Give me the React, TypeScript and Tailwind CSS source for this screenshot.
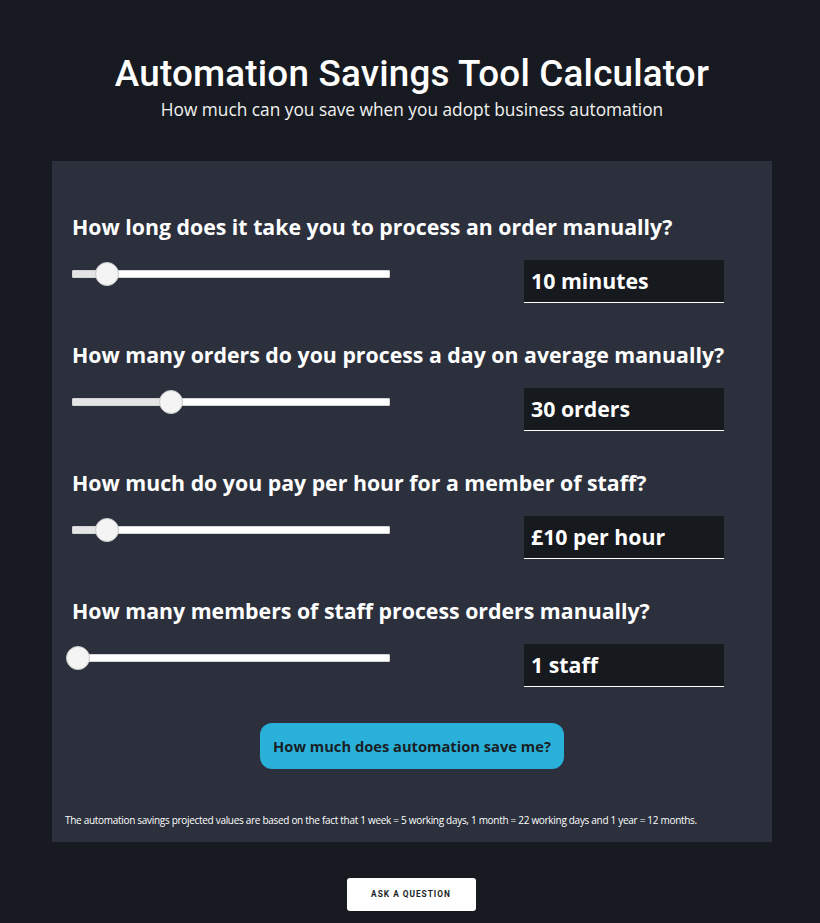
const questions = [
  { label: "How long does it take you to process an order manually?", value: "10 minutes", pos: 11 },
  { label: "How many orders do you process a day on average manually?", value: "30 orders", pos: 31.2 },
  { label: "How much do you pay per hour for a member of staff?", value: "£10 per hour", pos: 11 },
  { label: "How many members of staff process orders manually?", value: "1 staff", pos: 1.8 },
];

function Slider({ pos }: { pos: number }) {
  return (
    <div className="relative h-[27px] w-[318px] flex items-center">
      <div className="h-[8px] w-full bg-white rounded-[1px] border border-[#d4d4d4] overflow-hidden">
        <div className="h-full bg-[#e4e4e4]" style={{ width: `${pos}%` }} />
      </div>
      <div
        className="absolute top-[2px] h-[24px] w-[24px] -ml-[12px] rounded-full bg-[#f4f4f4] border border-[#c9c9c9]"
        style={{ left: `${pos}%` }}
      />
    </div>
  );
}

export default function App() {
  return (
    <div className="min-h-screen bg-[#171a20] pl-[4px] flex flex-col items-center font-['Open_Sans',sans-serif] text-white">
      <h1 className="mt-[52px] text-[36.8px] leading-[44px] font-medium font-['Roboto',sans-serif] tracking-[0.2px]">
        Automation Savings Tool Calculator
      </h1>
      <p className="mt-[2px] text-[17.3px] leading-[24px] text-[#f2f2f2]">
        How much can you save when you adopt business automation
      </p>

      <div className="mt-[39px] w-[720px] bg-[#2b303c] pt-[52px] pb-[16px]">
        {questions.map((q) => (
          <div key={q.label} className="px-[20px] mb-[38px]">
            <h2 className="text-[21.3px] leading-[27px] font-bold">{q.label}</h2>
            <div className="mt-[20px] flex items-start justify-between pr-[28px]">
              <Slider pos={q.pos} />
              <div className="w-[200px] h-[43px] bg-[#16191e] border-b border-white px-[7px] flex items-center text-[21.3px] font-bold">
                {q.value}
              </div>
            </div>
          </div>
        ))}

        <div className="-mt-[2px] flex justify-center">
          <button className="h-[46px] px-[13px] rounded-[12px] bg-[#29b1d9] text-[#1a1e25] text-[14.7px] font-bold">
            How much does automation save me?
          </button>
        </div>

        <p className="mt-[45px] px-[13px] text-[10px] leading-[12px] tracking-[-0.3px] text-white">
          The automation savings projected values are based on the fact that 1 week = 5 working days, 1 month = 22 working days and 1 year = 12 months.
        </p>
      </div>

      <button className="mt-[36px] mb-[13px] -ml-[2px] h-[33px] w-[129px] rounded-[3px] bg-white text-[#1c1f26] text-[8.3px] font-bold tracking-[1px] font-['Roboto',sans-serif]">
        ASK A QUESTION
      </button>
    </div>
  );
}
